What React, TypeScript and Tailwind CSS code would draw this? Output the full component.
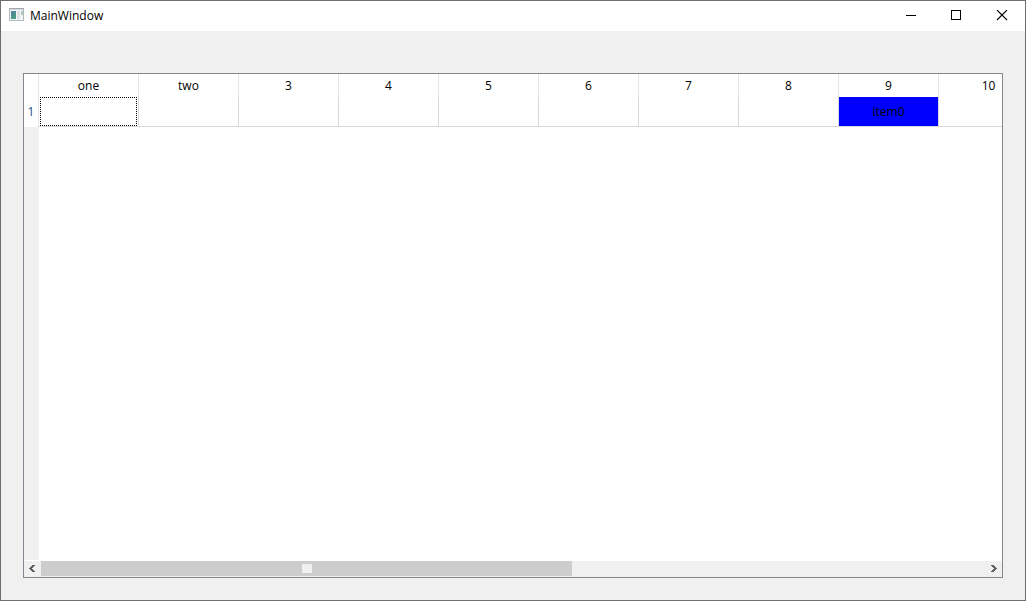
import { useState } from "react";

const COLUMN_COUNT = 10;
const FIRST_LABELS = ["one", "two"];

const columns = Array.from({ length: COLUMN_COUNT }, (_, i) => FIRST_LABELS[i] ?? String(i + 1));

const items: Record<number, { text: string; className: string }> = {
  8: { text: "item0", className: "bg-[#0000ff]" },
};

const AppIcon = () => (
  <svg width="16" height="16" viewBox="0 0 16 16" shapeRendering="crispEdges" aria-hidden="true">
    <defs>
      <linearGradient id="pane" x1="0" y1="0" x2="0.6" y2="1">
        <stop offset="0" stopColor="#5c80a8" />
        <stop offset="1" stopColor="#45a07c" />
      </linearGradient>
    </defs>
    <rect x="0" y="0" width="15" height="13" fill="#b4b8bc" />
    <rect x="0" y="0" width="15" height="1" fill="#a2a7ac" />
    <rect x="1" y="1" width="13" height="1" fill="#d4dae2" />
    <rect x="1" y="2" width="13" height="10" fill="#f4f5f7" />
    <rect x="2" y="3" width="5" height="8" fill="url(#pane)" />
    <rect x="8" y="3" width="3" height="8" fill="#dfe2e5" />
    <rect x="12" y="3" width="2" height="4" fill="#a9d3b4" />
    <rect x="12" y="3" width="2" height="1" fill="#a8c2e6" />
  </svg>
);

const TitleBar = () => (
  <header className="flex h-[30px] shrink-0 items-center justify-between bg-white">
    <div className="flex items-center gap-[5px] pl-2">
      <AppIcon />
      <h1 className="text-[12px] leading-4">MainWindow</h1>
    </div>
    <div className="flex h-full">
      <button type="button" aria-label="Minimize" className="flex w-[46px] items-center justify-center hover:bg-[#e5e5e5]">
        <svg width="12" height="12" shapeRendering="crispEdges">
          <rect x="2" y="5" width="10" height="1" fill="#000" />
        </svg>
      </button>
      <button type="button" aria-label="Maximize" className="flex w-[46px] items-center justify-center hover:bg-[#e5e5e5]">
        <svg width="12" height="12" shapeRendering="crispEdges">
          <rect x="1.5" y="0.5" width="9" height="9" fill="none" stroke="#000" />
        </svg>
      </button>
      <button type="button" aria-label="Close" className="flex w-[46px] items-center justify-center hover:bg-[#e81123]">
        <svg width="12" height="12">
          <path d="M1 0L11 10M11 0L1 10" stroke="#000" strokeWidth="1.1" />
        </svg>
      </button>
    </div>
  </header>
);

const ScrollBar = () => (
  <div className="flex h-4 shrink-0 bg-[#f0f0f0] pb-px">
    <button type="button" aria-label="Scroll left" className="flex w-[17px] items-center justify-center">
      <svg width="7" height="7" shapeRendering="crispEdges">
        <path d="M3 0h3v1h-1v1h-1v1h-1v1h1v1h1v1h1v1h-3v-1h-1v-1h-1v-1h-1v-1h1v-1h1v-1h1z" fill="#606060" />
      </svg>
    </button>
    <div className="flex-1">
      <div className="flex h-full w-9/16 items-center justify-center bg-[#cdcdcd]">
        <div className="h-[9px] w-[10px] bg-[#f0f0f0]" />
      </div>
    </div>
    <button type="button" aria-label="Scroll right" className="flex w-[17px] items-center justify-center">
      <svg width="7" height="7" shapeRendering="crispEdges">
        <path d="M1 0h3v1h1v1h1v1h1v1h-1v1h-1v1h-1v1h-3v-1h1v-1h1v-1h1v-1h-1v-1h-1v-1h-1z" fill="#606060" />
      </svg>
    </button>
  </div>
);

const TableWidget = () => {
  const [current, setCurrent] = useState(0);

  return (
    <div className="flex min-h-0 min-w-0 flex-1 flex-col border border-[#828790] bg-white">
      <div className="flex min-h-0 flex-1 flex-col overflow-hidden pb-px">
        <table className="w-max shrink-0 table-fixed border-separate border-spacing-0 text-center text-[12px] leading-4">
          <colgroup>
            <col className="w-[15px]" />
            {columns.map((label) => (
              <col key={label} className="w-[100px]" />
            ))}
          </colgroup>
          <thead>
            <tr className="h-[23px]">
              <td className="w-[15px] min-w-[15px] border-r border-[#e5e5e5] p-0" />
              {columns.map((label) => (
                <th key={label} scope="col" className="w-[100px] min-w-[100px] border-r border-[#e5e5e5] p-0 font-normal">
                  {label}
                </th>
              ))}
            </tr>
          </thead>
          <tbody>
            <tr className="h-[30px]">
              <th scope="row" className="border-r border-r-[#e5e5e5] p-0 font-normal text-[#1f4e8c]">
                1
              </th>
              {columns.map((label, i) => (
                <td
                  key={label}
                  onClick={() => setCurrent(i)}
                  className={`border-r border-b border-[#d8d8d8] p-0 ${items[i]?.className ?? ""}`}
                >
                  <div
                    className={
                      current === i
                        ? "mx-px flex h-[29px] items-center justify-center border border-dotted border-black"
                        : "flex h-[29px] items-center justify-center"
                    }
                  >
                    {items[i]?.text}
                  </div>
                </td>
              ))}
            </tr>
          </tbody>
        </table>
        <div className="w-[15px] flex-1 bg-[#f0f0f0]" />
      </div>
      <ScrollBar />
    </div>
  );
};

export default function App() {
  return (
    <div className="flex h-screen flex-col border border-[#6e6e6e] bg-[#f0f0f0] font-['Open_Sans','Noto_Sans_CJK_KR',sans-serif] text-black">
      <TitleBar />
      <main className="flex min-h-0 flex-1 px-[22px] pt-[42px] pb-[22px]">
        <TableWidget />
      </main>
    </div>
  );
}
